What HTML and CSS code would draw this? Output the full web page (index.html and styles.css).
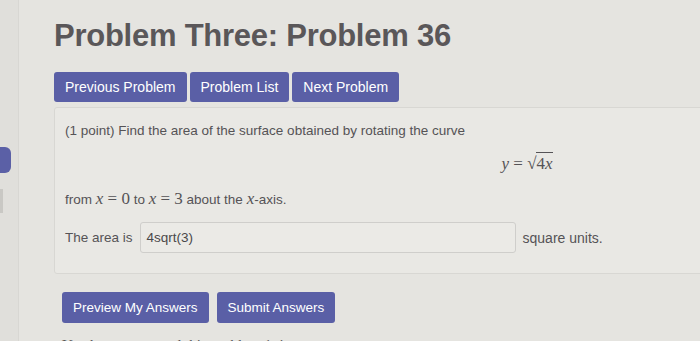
FILE: index.html
```html
<!DOCTYPE html>
<html>
<head>
<meta charset="utf-8">
<link rel="stylesheet" href="styles.css">
</head>
<body>
<div class="page">
  <aside class="side">
    <div class="side-box">
      <div class="side-tab"></div>
      <div class="side-item"></div>
    </div>
  </aside>
  <main class="main">
    <h1 class="title">Problem Three: Problem 36</h1>
    <nav class="nav">
      <span class="btn">Previous Problem</span>
      <span class="btn">Problem List</span>
      <span class="btn">Next Problem</span>
    </nav>
    <section class="panel">
      <p class="line">(1 point) Find the area of the surface obtained by rotating the curve</p>
      <div class="math-display"><span class="math"><i>y</i> = <span class="sqrt"><span class="rad">√</span><span class="under">4<i>x</i></span></span></span></div>
      <p class="line">from <span class="math"><i>x</i> = 0</span> to <span class="math"><i>x</i> = 3</span> about the <span class="math"><i>x</i></span>-axis.</p>
      <div class="answer">
        <span>The area is</span>
        <span class="input">4sqrt(3)</span>
        <span class="units">square units.</span>
      </div>
    </section>
    <div class="actions">
      <span class="btn btn-lg">Preview My Answers</span>
      <span class="btn btn-lg">Submit Answers</span>
    </div>
    <p class="note">You have attempted this problem 1 time.</p>
  </main>
</div>
</body>
</html>
```
FILE: styles.css
```css
html, body {
  margin: 0;
  padding: 0;
  background: #e5e4e0;
  overflow: hidden;
  width: 700px;
  height: 341px;
}
.page {
  display: flex;
  font-family: "Liberation Sans", Arial, sans-serif;
  color: #555356;
}
.side {
  width: 18px;
  flex: none;
  background: #e0dfdb;
  border-right: 1px solid #d8d7d3;
  padding-top: 128px;
}
.side-box {
  display: flex;
  flex-direction: column;
  gap: 16px;
}
.side-tab {
  width: 11px;
  height: 26px;
  background: #5b60a6;
  border-radius: 0 6px 6px 0;
  margin-top: 19px;
}
.side-item {
  width: 3px;
  height: 24px;
  background: #c9c8c4;
}
.main {
  flex: none;
  width: 960px;
  padding-left: 35px;
}
.title {
  margin: 17px 0 0 0;
  font-size: 31px;
  line-height: 37px;
  font-weight: bold;
  color: #5a5759;
  letter-spacing: -0.25px;
}
.nav {
  display: flex;
  gap: 3px;
  margin-top: 18px;
}
.btn {
  display: inline-block;
  background: #5a5fa6;
  color: #fff;
  font-size: 14px;
  line-height: 30px;
  height: 30px;
  padding: 0 11px;
  border-radius: 3px;
}
.panel {
  margin-top: 5px;
  width: 946px;
  box-sizing: border-box;
  background: #e9e8e4;
  border: 1px solid #d8d7d3;
  border-radius: 3px;
  padding: 14px 10px 20px 10px;
  font-size: 13.5px;
}
.line {
  margin: 0;
  line-height: 18px;
}
.math-display {
  text-align: center;
  margin: 12px 0 13px;
  line-height: 24px;
}
.math {
  font-family: "Liberation Serif", "Times New Roman", serif;
  font-size: 17px;
}
.sqrt {
  display: inline-block;
}
.under {
  border-top: 1px solid #555356;
  padding-top: 1px;
}
.answer {
  display: flex;
  align-items: center;
  gap: 7px;
  margin-top: 13px;
}
.input {
  width: 368px;
  height: 29px;
  line-height: 29px;
  padding-left: 6px;
  background: #ebeae6;
  border: 1px solid #cfcecb;
  border-radius: 3px;
  color: #4a484a;
}
.units {
  font-size: 14px;
}
.actions {
  display: flex;
  gap: 8px;
  margin-top: 18px;
  padding-left: 8px;
}
.btn-lg {
  height: 31px;
  line-height: 31px;
  font-size: 13.5px;
  padding: 0 11px;
}
.note {
  margin: 14px 0 0 8px;
  font-family: "Liberation Serif", serif;
  font-size: 15px;
  color: #555;
}
```
